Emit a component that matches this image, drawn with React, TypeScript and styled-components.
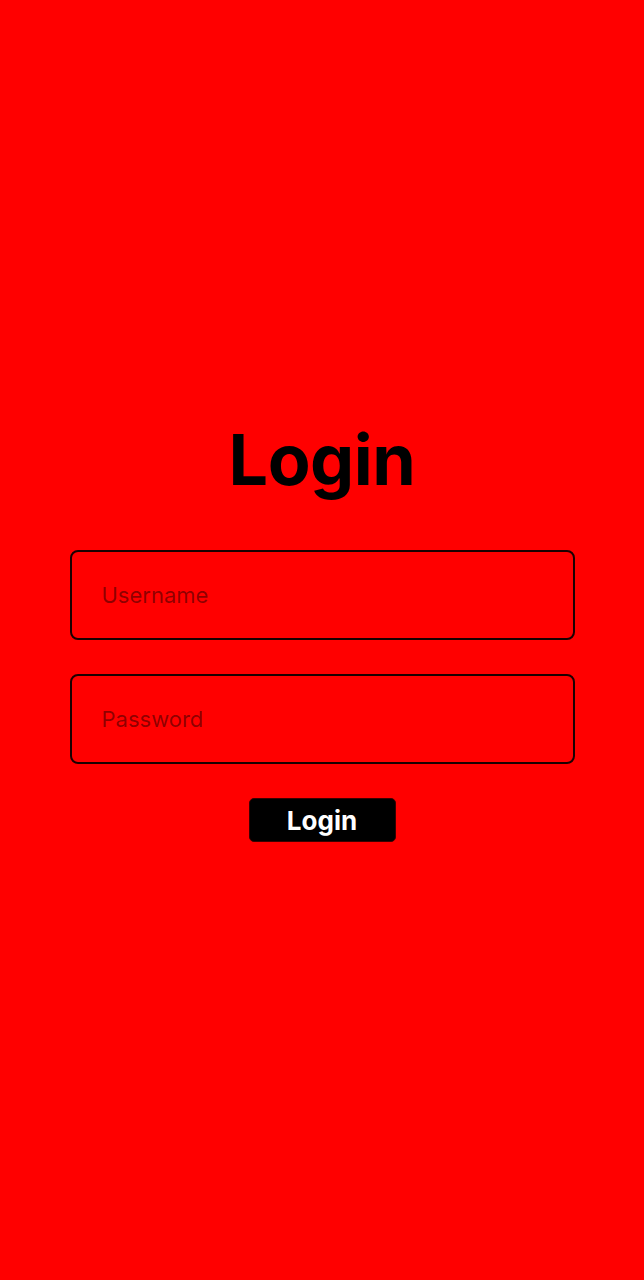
import React from "react";
import styled, { createGlobalStyle } from "styled-components";

const Global = createGlobalStyle`
  html, body { margin: 0; padding: 0; background: #ff0000; }
  body { font-family: Inter, "Noto Sans", sans-serif; }
  * { box-sizing: border-box; }
`;

const Page = styled.div`
  min-height: 1280px;
  display: flex;
  flex-direction: column;
  align-items: center;
  justify-content: center;
  background: #ff0000;
  padding-bottom: 22px;
`;

const Title = styled.h1`
  margin: 0 0 46px;
  font-size: 70px;
  line-height: 88px;
  font-weight: 700;
  color: #000;
  letter-spacing: -0.5px;
`;

const Form = styled.form`
  width: 505px;
  display: flex;
  flex-direction: column;
  align-items: center;
  gap: 34px;
`;

const Field = styled.input`
  width: 100%;
  height: 90px;
  padding: 0 30px;
  border: 2px solid #1a0000;
  border-radius: 8px;
  background: transparent;
  font-family: Inter, "Noto Sans", sans-serif;
  font-size: 22px;
  color: #000;
  outline: none;
  &::placeholder { color: rgba(0, 0, 0, 0.45); }
`;

const Button = styled.button`
  width: 147px;
  height: 44px;
  border: 1px solid #3a0000;
  border-radius: 5px;
  background: #000;
  color: #fff;
  font-family: Inter, "Noto Sans", sans-serif;
  font-size: 26px;
  font-weight: 700;
  cursor: pointer;
`;

export default function App() {
  return (
    <>
      <Global />
      <Page>
        <Title>Login</Title>
        <Form onSubmit={(e) => e.preventDefault()}>
          <Field placeholder="Username" />
          <Field placeholder="Password" type="password" />
          <Button type="submit">Login</Button>
        </Form>
      </Page>
    </>
  );
}
